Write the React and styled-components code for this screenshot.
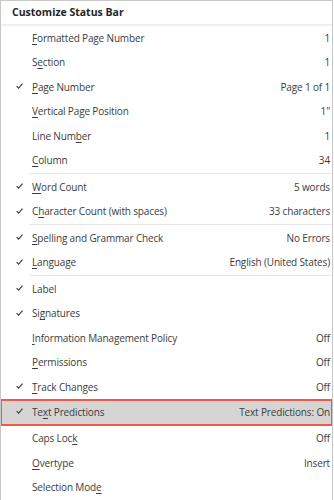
import React from "react";
import styled, { createGlobalStyle } from "styled-components";

const items = [
  { label: "Formatted Page Number", key: 0, value: "1" },
  { label: "Section", key: 1, value: "1" },
  { label: "Page Number", key: 0, value: "Page 1 of 1", checked: true },
  { label: "Vertical Page Position", key: 0, value: "1\"" },
  { label: "Line Number", key: 8, value: "1" },
  { label: "Column", key: 0, value: "34", sep: true },
  { label: "Word Count", key: 0, value: "5 words", checked: true },
  { label: "Character Count (with spaces)", key: 1, value: "33 characters", checked: true, sep: true },
  { label: "Spelling and Grammar Check", key: 0, value: "No Errors", checked: true },
  { label: "Language", key: 0, value: "English (United States)", checked: true, sep: true },
  { label: "Label", checked: true },
  { label: "Signatures", key: 2, checked: true },
  { label: "Information Management Policy", key: 0, value: "Off" },
  { label: "Permissions", key: 0, value: "Off" },
  { label: "Track Changes", key: 0, value: "Off", checked: true },
  { label: "Text Predictions", key: 2, value: "Text Predictions: On", checked: true, active: true },
  { label: "Caps Lock", key: 8, value: "Off" },
  { label: "Overtype", key: 0, value: "Insert" },
  { label: "Selection Mode", key: 13 },
];

const GlobalStyle = createGlobalStyle`
  html, body {
    margin: 0;
    padding: 0;
    background: #ffffff;
  }
  body {
    font-family: "Open Sans", "Noto Sans", sans-serif;
  }
`;

const Panel = styled.div`
  width: 333px;
  height: 500px;
  box-sizing: border-box;
  border: 1px solid #c8c8c8;
  border-bottom: none;
  background: #fff;
  overflow: hidden;
`;

const Header = styled.div`
  height: 22.5px;
  display: flex;
  align-items: center;
  padding-left: 11px;
  font-size: 10.5px;
  font-weight: 700;
  color: #262626;
  border-bottom: 2px solid #f0f0f0;
`;

const Row = styled.div`
  height: ${(p) => (p.$active ? "27px" : "24.5px")};
  display: flex;
  align-items: center;
  box-sizing: border-box;
  font-size: 10px;
  letter-spacing: -0.15px;
  color: #3c3c3c;
  padding-right: 2px;
  ${(p) =>
    p.$active &&
    `
    background: #d6d5d3;
    outline: 2px solid #ef5a4c;
    outline-offset: -2px;
    margin-left: -1px;
    margin-right: -1px;
    padding-left: 1px;
    padding-right: 3px;
    padding-bottom: 2px;
  `}
`;

const Check = styled.span`
  width: 31px;
  flex: none;
  display: flex;
  padding-left: 15px;
  padding-bottom: 1px;
  box-sizing: border-box;
`;

const Label = styled.span`
  flex: 1;
  white-space: nowrap;
`;

const Value = styled.span`
  white-space: nowrap;
`;

const Separator = styled.div`
  height: 1px;
  margin: 0.5px 0 0.5px 28px;
  background: #e6e6e6;
`;

const Key = styled.u`
  text-underline-offset: 2px;
`;

const CheckMark = () => (
  <svg width="7" height="6" viewBox="0 0 7 6">
    <path d="M0.6 3.1 L2.6 5.1 L6.5 0.6" fill="none" stroke="#3a3a3a" strokeWidth="1.1" />
  </svg>
);

const renderLabel = (text, key) => {
  if (key === undefined) return text;
  return (
    <>
      {text.slice(0, key)}
      <Key>{text[key]}</Key>
      {text.slice(key + 1)}
    </>
  );
};

export default function App() {
  return (
    <>
      <GlobalStyle />
      <Panel>
        <Header>Customize Status Bar</Header>
        {items.map((it) => (
          <React.Fragment key={it.label}>
            <Row $active={it.active}>
              <Check>{it.checked && <CheckMark />}</Check>
              <Label>{renderLabel(it.label, it.key)}</Label>
              {it.value && <Value>{it.value}</Value>}
            </Row>
            {it.sep && <Separator />}
          </React.Fragment>
        ))}
      </Panel>
    </>
  );
}
